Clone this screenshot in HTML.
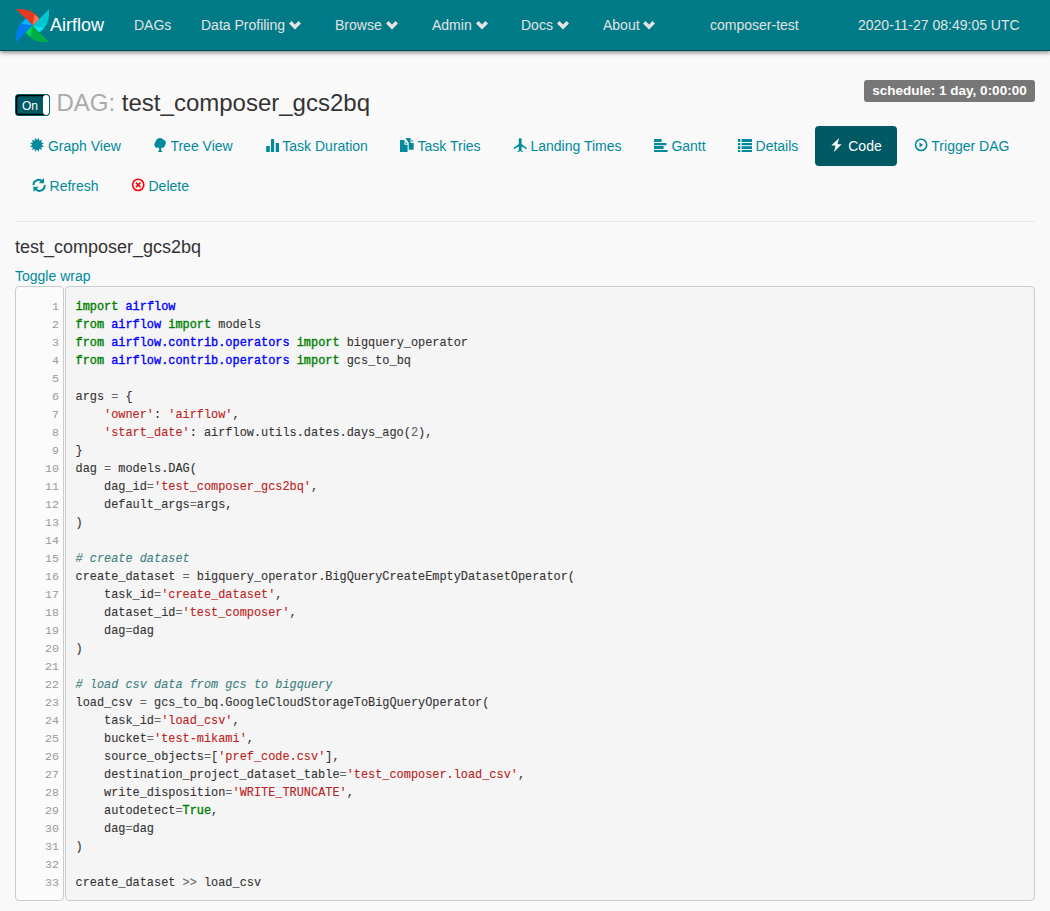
<!DOCTYPE html>
<html><head><meta charset="utf-8">
<style>
*{box-sizing:border-box;}
html,body{margin:0;padding:0;}
body{width:1050px;height:911px;overflow:hidden;background:#f9f9f9;font-family:"Liberation Sans",sans-serif;font-size:14px;line-height:20px;color:#333;position:relative;}
.nav{position:absolute;left:0;top:0;width:1050px;height:51px;background:#007a87;border-bottom:1px solid #004a52;box-shadow:0 2px 4px rgba(0,0,0,.42);}
.nav .t{position:absolute;top:15px;color:#e3e3e3;white-space:nowrap;}
.nav .brand{font-size:18px;color:#fff;top:15px;}
.chev{display:inline-block;vertical-align:top;margin-top:6px;margin-left:0px;}
a{color:#008a9b;text-decoration:none;}
.abs{position:absolute;white-space:nowrap;}
.toggle{position:absolute;left:15px;top:94px;width:35px;height:22px;background:#005963;border-radius:4px;}
.toggle .in{position:absolute;left:1px;top:1px;right:1px;bottom:1px;border-radius:2px;box-shadow:inset 1.3px 1.3px 0 #000,inset 0 -1.3px 0 #000;}
.toggle .knob{position:absolute;right:1px;top:1px;width:6.5px;height:20px;background:#fff;border-radius:3px;}
.toggle .on{position:absolute;left:7px;top:5px;font-size:12px;line-height:14px;color:#fff;}
h3{margin:0;font-weight:normal;}
.label{position:absolute;left:864px;top:80px;width:171px;height:22px;background:#777;border-radius:3px;color:#fff;font-weight:bold;font-size:13.5px;line-height:22px;text-align:center;}
ul.pills{position:absolute;left:15px;top:126px;width:1020px;margin:0;padding:0;list-style:none;}
ul.pills li{float:left;margin-left:2px;}
ul.pills li:first-child,ul.pills li.nl{margin-left:0;}
ul.pills li.nl{clear:left;}
ul.pills a{display:block;height:40px;padding:10px 15px;line-height:20px;white-space:nowrap;color:#008a9b;}
ul.pills a.active{background:#005963;color:#fff;border-radius:4px;}
.ic{display:inline-block;width:14px;height:14px;vertical-align:top;margin-top:2px;}
hr{position:absolute;left:15px;top:221px;width:1020px;margin:0;border:0;border-top:1px solid #e8e8e8;}
.gut{position:absolute;left:15px;top:286px;width:49px;height:615px;border:1px solid #ccc;border-radius:4px;background:#fbfbfb;}
.code{position:absolute;left:65px;top:286px;width:970px;height:615px;border:1px solid #ccc;border-radius:4px;background:#f5f5f5;}
pre{margin:0;font-family:"Liberation Mono",monospace;font-size:11.9px;line-height:18px;}
.gut pre{position:absolute;right:4px;top:10.5px;text-align:right;color:#999;font-size:11.6px;}
.code pre{position:absolute;left:9.5px;top:10.5px;color:#333;-webkit-text-stroke:0.1px #333;}
.k{color:#008000;font-weight:normal;-webkit-text-stroke:0.35px #008000;}
.nn{color:#0000ff;font-weight:normal;-webkit-text-stroke:0.35px #0000ff;}
.s{color:#ba2121;-webkit-text-stroke:0.1px #ba2121;}
.o{color:#666;-webkit-text-stroke:0.1px #666;}
.c{color:#408080;font-style:italic;-webkit-text-stroke:0.1px #408080;}
</style></head><body>
<div class="nav">
  <svg style="position:absolute;left:15.9px;top:8.9px" width="33.2" height="33.2" viewBox="0 0 33 33">
    <g id="blade">
      <path d="M0 0L9.6 9.7C12.5 12 14.5 14 16.5 16.5L23.2 10.2C20.5 3.5 12 -0.5 0 0Z" fill="#e43921"/>
      <path d="M18.2 5.8C17.8 9 17.6 13 16.5 16.5L23.2 10.2C22 8.2 20.3 6.8 18.2 5.8Z" fill="#ff7557"/>
    </g>
    <g transform="rotate(90 16.5 16.5)">
      <path d="M0 0L9.6 9.7C12.5 12 14.5 14 16.5 16.5L23.2 10.2C20.5 3.5 12 -0.5 0 0Z" fill="#00c7d4"/>
      <path d="M18.2 5.8C17.8 9 17.6 13 16.5 16.5L23.2 10.2C22 8.2 20.3 6.8 18.2 5.8Z" fill="#11e1ee"/>
    </g>
    <g transform="rotate(180 16.5 16.5)">
      <path d="M0 0L9.6 9.7C12.5 12 14.5 14 16.5 16.5L23.2 10.2C20.5 3.5 12 -0.5 0 0Z" fill="#00ad46"/>
      <path d="M18.2 5.8C17.8 9 17.6 13 16.5 16.5L23.2 10.2C22 8.2 20.3 6.8 18.2 5.8Z" fill="#04d659"/>
    </g>
    <g transform="rotate(270 16.5 16.5)">
      <path d="M0 0L9.6 9.7C12.5 12 14.5 14 16.5 16.5L23.2 10.2C20.5 3.5 12 -0.5 0 0Z" fill="#017cee"/>
      <path d="M18.2 5.8C17.8 9 17.6 13 16.5 16.5L23.2 10.2C22 8.2 20.3 6.8 18.2 5.8Z" fill="#0cb6ff"/>
    </g>
  </svg>
  <span class="t brand" style="left:50px">Airflow</span>
  <span class="t" style="left:134px">DAGs</span>
  <span class="t" style="left:201px">Data Profiling <svg class="chev" width="12" height="9" viewBox="0 0 12 9"><path d="M0 2.6L2.5 0L6 3.5L9.5 0L12 2.6L6 8.4Z" fill="#e3e3e3"/></svg></span>
  <span class="t" style="left:335px">Browse <svg class="chev" width="12" height="9" viewBox="0 0 12 9"><path d="M0 2.6L2.5 0L6 3.5L9.5 0L12 2.6L6 8.4Z" fill="#e3e3e3"/></svg></span>
  <span class="t" style="left:432px">Admin <svg class="chev" width="12" height="9" viewBox="0 0 12 9"><path d="M0 2.6L2.5 0L6 3.5L9.5 0L12 2.6L6 8.4Z" fill="#e3e3e3"/></svg></span>
  <span class="t" style="left:521px">Docs <svg class="chev" width="12" height="9" viewBox="0 0 12 9"><path d="M0 2.6L2.5 0L6 3.5L9.5 0L12 2.6L6 8.4Z" fill="#e3e3e3"/></svg></span>
  <span class="t" style="left:603px">About <svg class="chev" width="12" height="9" viewBox="0 0 12 9"><path d="M0 2.6L2.5 0L6 3.5L9.5 0L12 2.6L6 8.4Z" fill="#e3e3e3"/></svg></span>
  <span class="t" style="left:710px">composer-test</span>
  <span class="t" style="left:858px">2020-11-27 08:49:05 UTC</span>
</div>

<div class="toggle"><div class="in"></div><span class="on">On</span><span class="knob"></span></div>
<h3 class="abs" style="left:56.5px;top:90px;font-size:24px;line-height:26px;"><span style="color:#aaa">DAG: </span><span>test_composer_gcs2bq</span></h3>
<div class="label">schedule: 1 day, 0:00:00</div>

<ul class="pills">
<li><a><svg class="ic" viewBox="0 0 14 14"><path fill="currentColor" d="M8.89 -0.25L9.35 2.73L12.16 1.64L11.07 4.45L14.05 4.91L11.70 6.80L14.05 8.69L11.07 9.15L12.16 11.96L9.35 10.87L8.89 13.85L7.00 11.50L5.11 13.85L4.65 10.87L1.84 11.96L2.93 9.15L-0.05 8.69L2.30 6.80L-0.05 4.91L2.93 4.45L1.84 1.64L4.65 2.73L5.11 -0.25L7.00 2.10Z"/></svg> Graph View</a></li>
<li><a><svg class="ic" viewBox="0 0 14 14"><path fill="currentColor" d="M7.2 0C8.6 0 9.6 0.8 10 1.6C11.6 2 12.9 3.2 12.9 4.9C12.9 5.9 12.4 6.6 11.9 7.1C11.9 8.6 11.2 9.6 10 9.8H8.2V12.8L9.3 13.2V14H5.1V13.2L6.1 12.8V9.8H3.6C2.3 9.6 1.4 8.5 1.4 7.1C1.4 5.8 1.7 4.6 2.5 4.1C2.9 2.6 3.4 1.4 4.4 1.1C5 0.4 6 0 7.2 0Z"/></svg> Tree View</a></li>
<li><a><svg class="ic" viewBox="0 0 14 14"><path fill="currentColor" d="M1.2 8H4.8V14H1.2ZM6 1H9.1V14H6ZM10.7 5H14V14H10.7Z"/></svg> Task Duration</a></li>
<li><a><svg class="ic" viewBox="0 0 14 14"><path fill="currentColor" d="M0 2.06H4.5V6.8H7.6V13.9H0ZM5.55 3.6L7.4 5.75H5.55ZM5.55 0H10.57V4.96H13.7V11.8H8.7V5ZM11.4 1.6L13.7 3.6H11.4Z"/></svg> Task Tries</a></li>
<li><a><svg class="ic" viewBox="0 0 14 14"><path fill="currentColor" d="M6.7 0.3C6.1 0.3 5.8 0.8 5.8 1.5V6.1L0.5 10L1.2 11.2L5.8 8.3V12.4L4.4 13.6L5 14.3L7.2 13.1L9.4 14.3L10 13.6L8.6 12.4V8.3L13.2 11.2L13.9 10L8.6 6.1V1.5C8.6 0.8 8.3 0.3 7.7 0.3Z"/></svg> Landing Times</a></li>
<li><a><svg class="ic" viewBox="0 0 14 14"><path fill="currentColor" d="M-0.6 0.9H7.6V3.9H-0.6ZM-0.6 5H12.4V7.2H-0.6ZM-0.6 8.1H9.6V10.9H-0.6ZM-0.6 12H13.6V14.1H-0.6Z"/></svg> Gantt</a></li>
<li><a><svg class="ic" viewBox="0 0 14 14"><path fill="currentColor" d="M0 1H2.3V4H0ZM3.6 1H14V4H3.6ZM0 5H2.3V7.3H0ZM3.6 5H14V7.3H3.6ZM0 8.3H2.3V11H0ZM3.6 8.3H14V11H3.6ZM0 12H2.3V14.2H0ZM3.6 12H14V14.2H3.6Z"/></svg> Details</a></li>
<li><a class="active"><svg class="ic" viewBox="0 0 14 14"><path fill="currentColor" d="M9.15 0L1.35 7.5H5.6L3.95 14L11.65 6.35H7.4Z"/></svg> Code</a></li>
<li><a><svg class="ic" viewBox="0 0 14 14"><circle cx="7.1" cy="6.9" r="5.6" fill="none" stroke="currentColor" stroke-width="1.6"/><path fill="currentColor" d="M5.5 4.6L9.2 6.9L5.5 9.2Z"/></svg> Trigger DAG</a></li>
<li class="nl"><a><svg class="ic" style="width:15.7px" viewBox="0 0 15.7 14"><path fill="none" stroke="currentColor" stroke-width="1.9" d="M3.5 7.2A5 5 0 0 1 12.2 3.5"/><path fill="currentColor" d="M14 0V5.2H8.8Z"/><path fill="none" stroke="currentColor" stroke-width="1.9" d="M14.5 7A5 5 0 0 1 5.6 10.9"/><path fill="currentColor" d="M3.5 14V8.8H8.7Z"/></svg> Refresh</a></li>
<li><a><svg class="ic" style="color:red" viewBox="0 0 14 14"><circle cx="7.2" cy="6.9" r="5.6" fill="none" stroke="currentColor" stroke-width="1.6"/><path fill="none" stroke="currentColor" stroke-width="1.5" d="M4.9 4.6L9.5 9.2M9.5 4.6L4.9 9.2"/></svg> Delete</a></li>
</ul>

<hr>
<h3 class="abs" style="left:15px;top:236.5px;font-size:18px;line-height:20px;">test_composer_gcs2bq</h3>
<a class="abs" style="left:15px;top:266px">Toggle wrap</a>

<div class="gut"><pre>1
2
3
4
5
6
7
8
9
10
11
12
13
14
15
16
17
18
19
20
21
22
23
24
25
26
27
28
29
30
31
32
33</pre></div>
<div class="code"><pre><span class="k">import</span> <span class="nn">airflow</span>
<span class="k">from</span> <span class="nn">airflow</span> <span class="k">import</span> models
<span class="k">from</span> <span class="nn">airflow.contrib.operators</span> <span class="k">import</span> bigquery_operator
<span class="k">from</span> <span class="nn">airflow.contrib.operators</span> <span class="k">import</span> gcs_to_bq

args <span class="o">=</span> {
    <span class="s">'owner'</span>: <span class="s">'airflow'</span>,
    <span class="s">'start_date'</span>: airflow.utils.dates.days_ago(<span class="o">2</span>),
}
dag <span class="o">=</span> models.DAG(
    dag_id<span class="o">=</span><span class="s">'test_composer_gcs2bq'</span>,
    default_args<span class="o">=</span>args,
)

<span class="c"># create dataset</span>
create_dataset <span class="o">=</span> bigquery_operator.BigQueryCreateEmptyDatasetOperator(
    task_id<span class="o">=</span><span class="s">'create_dataset'</span>,
    dataset_id<span class="o">=</span><span class="s">'test_composer'</span>,
    dag<span class="o">=</span>dag
)

<span class="c"># load csv data from gcs to bigquery</span>
load_csv <span class="o">=</span> gcs_to_bq.GoogleCloudStorageToBigQueryOperator(
    task_id<span class="o">=</span><span class="s">'load_csv'</span>,
    bucket<span class="o">=</span><span class="s">'test-mikami'</span>,
    source_objects<span class="o">=</span>[<span class="s">'pref_code.csv'</span>],
    destination_project_dataset_table<span class="o">=</span><span class="s">'test_composer.load_csv'</span>,
    write_disposition<span class="o">=</span><span class="s">'WRITE_TRUNCATE'</span>,
    autodetect<span class="o">=</span><span class="k">True</span>,
    dag<span class="o">=</span>dag
)

create_dataset <span class="o">&gt;&gt;</span> load_csv</pre></div>
</body></html>
